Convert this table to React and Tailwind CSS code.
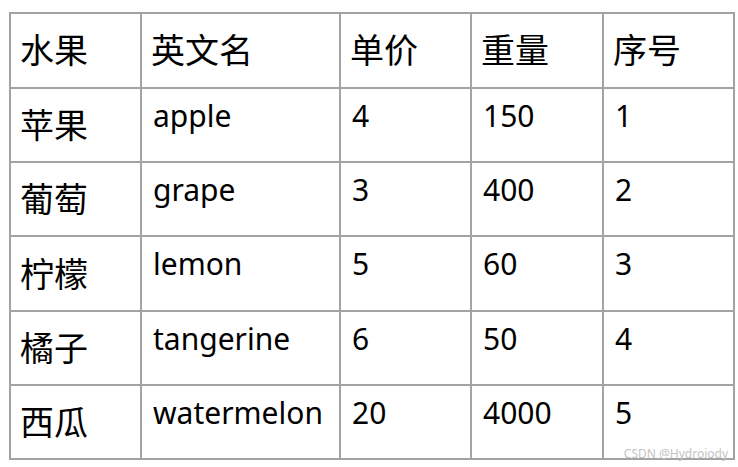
const header = ["水果", "英文名", "单价", "重量", "序号"]

const rows = [
    ["苹果", "apple", "4", "150", "1"],
    ["葡萄", "grape", "3", "400", "2"],
    ["柠檬", "lemon", "5", "60", "3"],
    ["橘子", "tangerine", "6", "50", "4"],
    ["西瓜", "watermelon", "20", "4000", "5"],
]

const App = () => {
    return (
        <div
            className="relative w-[738px] h-[467px] bg-white overflow-hidden"
            style={{ fontFamily: '"Noto Sans", "Noto Sans CJK SC", sans-serif' }}
        >
            <div className="absolute left-[9px] top-[12px] grid grid-cols-[129px_197px_129px_130px_129px] grid-rows-[73px_72px_72px_73px_72px_72px] gap-[2px] p-[2px] bg-[#a3a3a3] text-black">
                {header.map((h, i) => (
                    <div key={i} className="bg-white flex items-center pl-[9px] pb-[2px] text-[34px] leading-none">
                        {h}
                    </div>
                ))}
                {rows.map((row, r) =>
                    row.map((cell, c) =>
                        c === 0 ? (
                            <div key={r + "-" + c} className="bg-white flex items-center pl-[9px] text-[34px] leading-none">
                                {cell}
                            </div>
                        ) : (
                            <div key={r + "-" + c} className="bg-white pl-[11px] pt-[12px] text-[30px] leading-[30px]">
                                {cell}
                            </div>
                        )
                    )
                )}
            </div>
            <div className="absolute right-[10px] bottom-[7px] text-[12px] leading-none text-[#c4c4c4]">
                CSDN @Hydroiody
            </div>
        </div>
    )
}

export default App
